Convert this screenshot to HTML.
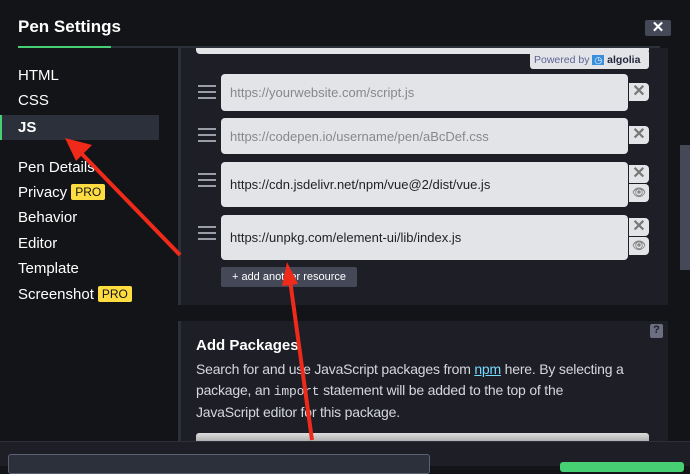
<!DOCTYPE html>
<html><head><style>
*{margin:0;padding:0;box-sizing:border-box}
body{width:690px;height:466px;background:#131417;font-family:"Liberation Sans",sans-serif;position:relative;overflow:hidden;color:#fff}
.a{position:absolute}
.nav{left:18px;font-size:15px;color:#fff}
.pro{display:inline-block;background:#ffdd40;color:#131417;font-size:12px;padding:1px 4px;border-radius:2px;margin-left:4px;vertical-align:1px}
.inp{background:#e3e4e8;border-radius:4px;left:221px;width:407px;color:#888;font-size:13px;padding-left:9px;display:flex;align-items:center}
.h{left:198px;width:18px}
.h i{display:block;height:2px;background:#9a9ea8;margin-bottom:4px}
.x{left:629px;width:20px;height:18px;background:#e3e4e8;border-radius:0 4px 4px 0;color:#777;font-size:16px;text-align:center;line-height:18px;font-weight:bold}
</style></head><body>
<div class="a" style="left:18px;top:17px;font-size:17px;font-weight:bold">Pen Settings</div>
<div class="a" style="left:18px;top:46px;width:642px;height:2px;background:#2c303a"></div>
<div class="a" style="left:18px;top:46px;width:93px;height:2px;background:#47cf73"></div>
<div class="a" style="left:645px;top:20px;width:26px;height:16px;background:#444857;border-radius:2px;text-align:center;font-size:15px;line-height:16px;font-weight:bold">✕</div>
<div class="a nav" style="top:67px">HTML</div>
<div class="a nav" style="top:92px">CSS</div>
<div class="a" style="left:0;top:115px;width:159px;height:25px;background:#2c303a;border-left:2px solid #47cf73"></div>
<div class="a nav" style="top:119px;font-weight:bold">JS</div>
<div class="a nav" style="top:159px">Pen Details</div>
<div class="a nav" style="top:184px">Privacy<span class="pro">PRO</span></div>
<div class="a nav" style="top:209px">Behavior</div>
<div class="a nav" style="top:235px">Editor</div>
<div class="a nav" style="top:260px">Template</div>
<div class="a nav" style="top:286px">Screenshot<span class="pro">PRO</span></div>

<div class="a" style="left:178px;top:48px;width:490px;height:257px;background:#1e1f26;border-left:3px solid #2c303a"></div>
<div class="a" style="left:196px;top:48px;width:453px;height:6px;background:#e3e4e8;border-radius:0 0 4px 4px"></div>
<div class="a" style="left:530px;top:52px;width:119px;height:17px;background:#e3e4e8;border-radius:0 0 3px 3px;font-size:10.5px;color:#5d6494;padding:2px 4px;white-space:nowrap">Powered by <span style="background:#3a8fdd;color:#fff;font-size:9px;padding:0 2px">◷</span> <b style="color:#23263b">algolia</b></div>
<div class="a" style="left:680px;top:48px;width:10px;height:257px;background:#131417"></div>
<div class="a" style="left:680px;top:145px;width:10px;height:125px;background:#444857"></div>

<div class="a h" style="top:85px"><i></i><i></i><i></i></div>
<div class="a inp" style="top:74px;height:37px">https://yourwebsite.com/script.js</div>
<div class="a x" style="top:83px">✕</div>
<div class="a h" style="top:128px"><i></i><i></i><i></i></div>
<div class="a inp" style="top:118px;height:36px">https://codepen.io/username/pen/aBcDef.css</div>
<div class="a x" style="top:126px">✕</div>
<div class="a h" style="top:173px"><i></i><i></i><i></i></div>
<div class="a inp" style="top:162px;height:45px;color:#222">https://cdn.jsdelivr.net/npm/vue@2/dist/vue.js</div>
<div class="a x" style="top:165px">✕</div>
<div class="a x" style="top:184px;font-size:11px;color:#888">👁</div>
<div class="a h" style="top:226px"><i></i><i></i><i></i></div>
<div class="a inp" style="top:215px;height:45px;color:#222">https://unpkg.com/element-ui/lib/index.js</div>
<div class="a x" style="top:218px">✕</div>
<div class="a x" style="top:237px;font-size:11px;color:#888">👁</div>
<div class="a" style="left:221px;top:267px;width:136px;height:20px;background:#444857;border-radius:2px;font-size:11px;line-height:20px;text-align:center">+ add another resource</div>

<div class="a" style="left:178px;top:321px;width:490px;height:145px;background:#1e1f26;border-left:3px solid #2c303a"></div>
<div class="a" style="left:650px;top:324px;width:13px;height:14px;background:#6b6f80;border-radius:2px;font-size:11px;font-weight:bold;text-align:center;color:#1e1f26">?</div>
<div class="a" style="left:196px;top:337px;font-size:15px;font-weight:bold">Add Packages</div>
<div class="a" style="left:196px;top:359px;width:480px;font-size:14px;line-height:21px;color:#d5d7de;white-space:nowrap;letter-spacing:-0.2px">Search for and use JavaScript packages from <span style="color:#76daff;text-decoration:underline">npm</span> here. By selecting a<br>package, an <span style="font-family:'Liberation Mono',monospace;font-size:13px">import</span> statement will be added to the top of the<br>JavaScript editor for this package.</div>
<div class="a" style="left:196px;top:433px;width:453px;height:12px;background:linear-gradient(#ddd,#999);border-radius:3px"></div>
<div class="a" style="left:0;top:441px;width:690px;height:25px;background:#1e1f26;border-top:1px solid #2c303a"></div>
<div class="a" style="left:8px;top:454px;width:422px;height:20px;background:#2c303a;border:1px solid #5a5f73;border-radius:3px"></div>
<div class="a" style="left:560px;top:462px;width:124px;height:10px;background:#47cf73;border-radius:3px"></div>

<svg class="a" style="left:0;top:0" width="690" height="466">
<g stroke="#f02a1a" stroke-width="4" fill="#f02a1a">
<line x1="180" y1="255" x2="80" y2="152"/>
<polygon points="65,138 92,145 76,161" stroke="none"/>
<line x1="312" y1="440" x2="290" y2="280"/>
<polygon points="287,262 298,284 282,286" stroke="none"/>
</g></svg>
</body></html>
